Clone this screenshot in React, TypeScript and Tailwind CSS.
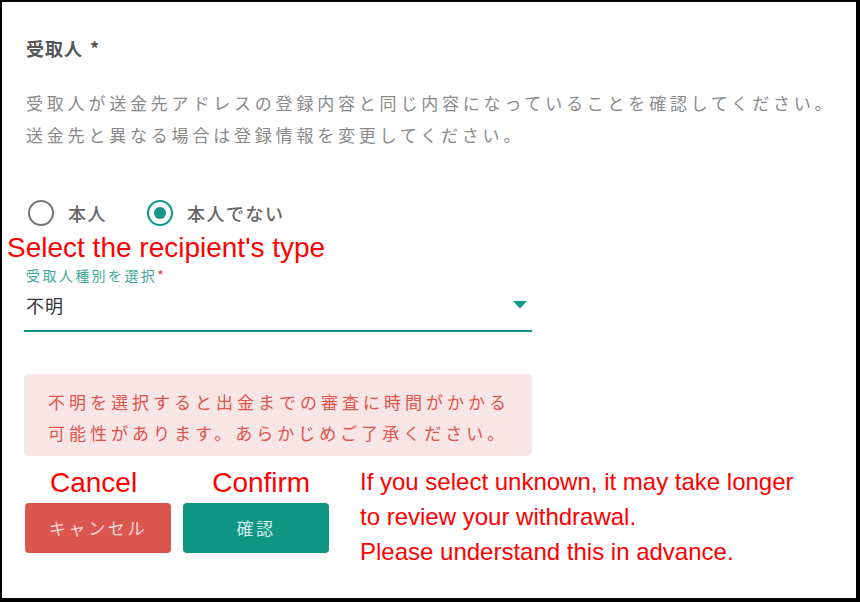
import React, { useState } from 'react';

// Fonts used across the form
const jp = "font-['Noto_Sans_CJK_JP','Noto_Sans',sans-serif]";
const note = "font-['Liberation_Sans',Arial,sans-serif] text-[#ff0000]";

type RadioProps = {
  label: string;
  checked: boolean;
  onSelect: () => void;
};

function Radio({ label, checked, onSelect }: RadioProps) {
  return (
    <button type="button" onClick={onSelect} className="flex items-center gap-[14px]">
      <span
        className={
          checked
            ? 'flex h-[26px] w-[26px] items-center justify-center rounded-full border-[2.5px] border-[#109686]'
            : 'flex h-[26px] w-[26px] items-center justify-center rounded-full border-[2.5px] border-[#767676]'
        }
      >
        {checked && <span className="h-[12px] w-[12px] rounded-full bg-[#109686]" />}
      </span>
      <span className={`${jp} text-[18px] font-medium leading-7 tracking-[1.5px] text-[#666]`}>{label}</span>
    </button>
  );
}

export default function App() {
  const [isSelf, setIsSelf] = useState(false);

  return (
    <div className="h-[602px] w-[860px] border-b-4 border-l-2 border-r-4 border-t-2 border-black bg-white pl-[22px]">
      {/* --- Recipient heading & description --- */}
      <div className={`${jp} ml-[2px] pt-[34px] text-[18px] font-bold leading-6 tracking-[1px] text-[#555]`}>
        受取人 <span className="ml-[2px]">*</span>
      </div>
      <p className={`${jp} ml-[2px] mt-[27px] text-[17px] leading-[32px] tracking-[3.8px] text-[#8a8a8a]`}>
        受取人が送金先アドレスの登録内容と同じ内容になっていることを確認してください。
        <br />
        送金先と異なる場合は登録情報を変更してください。
      </p>

      {/* --- Self / not self --- */}
      <div className="mt-[48px] flex items-center gap-[40px] pl-[4px]">
        <Radio label="本人" checked={isSelf} onSelect={() => setIsSelf(true)} />
        <Radio label="本人でない" checked={!isSelf} onSelect={() => setIsSelf(false)} />
      </div>

      <div className={`${note} ml-[-17px] mt-[5px] text-[28px] leading-[32px]`}>Select the recipient's type</div>

      {/* --- Recipient type select --- */}
      <div className={`${jp} ml-[2px] mt-[2px] text-[14px] leading-[18px] tracking-[2.4px] text-[#3ea89a]`}>
        受取人種別を選択<span className="text-[#e53935]">*</span>
      </div>
      <div className="mt-[9px] flex w-[508px] items-center justify-between border-b-2 border-[#109686] pb-[13px]">
        <span className={`${jp} ml-[2px] text-[18px] leading-6 tracking-[1px] text-[#333]`}>不明</span>
        <svg width="14" height="8" viewBox="0 0 14 8" className="mr-[5px]">
          <path d="M0 0h14L7 7.5z" fill="#109686" />
        </svg>
      </div>

      {/* --- Warning box --- */}
      <div className="mt-[42px] w-[508px] rounded-[5px] bg-[#f8e6e6] pb-[8px] pl-[24px] pt-[12px]">
        <p className={`${jp} text-[17px] leading-[31px] tracking-[4px] text-[#e0534a]`}>
          不明を選択すると出金までの審査に時間がかかる
          <br />
          可能性があります。あらかじめご了承ください。
        </p>
      </div>

      {/* --- Actions --- */}
      <div className="mt-[8px] flex">
        <div className="w-[336px]">
          <div className={`${note} mt-[3px] flex text-[28px] leading-[32px]`}>
            <span className="ml-[26px]">Cancel</span>
            <span className="ml-[75px]">Confirm</span>
          </div>
          <div className="mt-[4px] flex gap-[12px] pl-[1px]">
            <button
              type="button"
              className={`${jp} h-[50px] w-[146px] rounded-[4px] bg-[#dc5650] text-[17px] tracking-[2.6px] text-[#f8dad8]`}
            >
              キャンセル
            </button>
            <button
              type="button"
              className={`${jp} h-[50px] w-[146px] rounded-[4px] bg-[#0f9686] text-[17px] tracking-[2.6px] text-[#d2ece8]`}
            >
              確認
            </button>
          </div>
        </div>
        <p className={`${note} text-[24px] leading-[35px]`}>
          If you select unknown, it may take longer
          <br />
          to review your withdrawal.
          <br />
          Please understand this in advance.
        </p>
      </div>
    </div>
  );
}
